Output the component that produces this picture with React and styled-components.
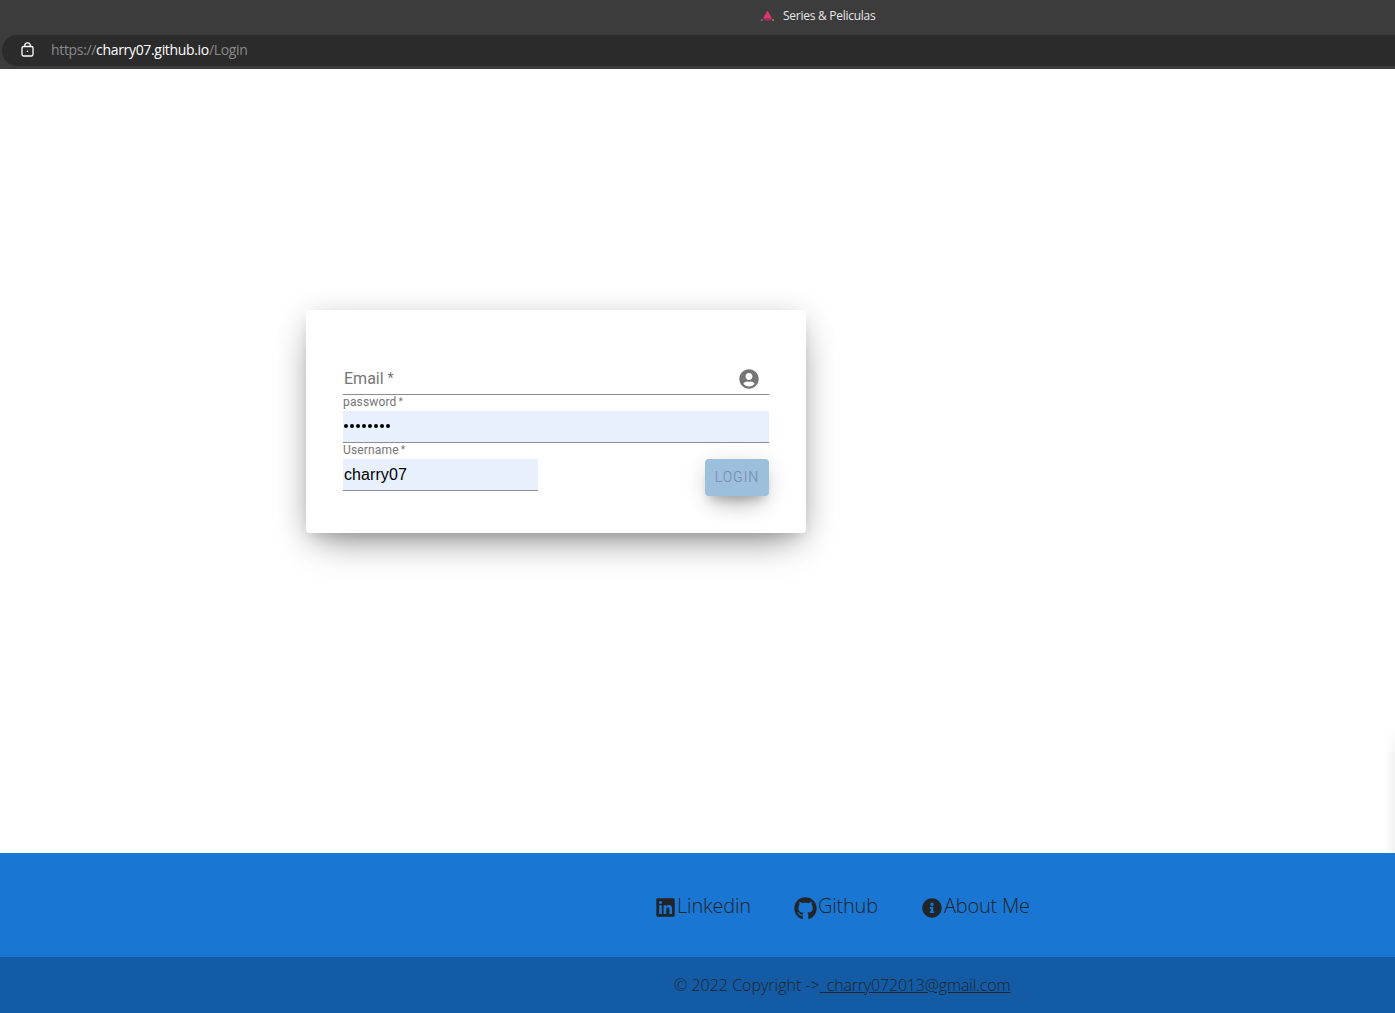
import { createGlobalStyle } from 'styled-components';
import styled from 'styled-components';
import { FaLinkedin, FaGithub, FaInfoCircle, FaUserCircle } from 'react-icons/fa';

const GlobalStyle = createGlobalStyle`
  html, body {
    margin: 0;
    padding: 0;
    background: #fff;
  }
  * { box-sizing: border-box; }
`;

const Page = styled.div`
  width: 1395px;
  height: 1013px;
  display: flex;
  flex-direction: column;
  overflow: hidden;
`;

const TitleBar = styled.div`
  height: 35px;
  background: #3c3c3c;
  display: flex;
  align-items: center;
  padding: 0 0 4px 760px;
  gap: 8px;
  color: #e8e8e8;
  font-family: "Open Sans", sans-serif;
  font-size: 12px;
  letter-spacing: -0.27px;
`;

const UrlBar = styled.div`
  height: 31px;
  margin-left: 2px;
  background: #2b2b2b;
  border-radius: 15px 0 0 15px;
  display: flex;
  align-items: center;
  padding: 0 0 2px 19px;
  gap: 17px;
  font-family: "Open Sans", sans-serif;
  font-size: 14px;
  letter-spacing: -0.33px;
  color: #8a8a8a;
`;

const UrlRow = styled.div`
  background: #3c3c3c;
  height: 34px;
  padding-bottom: 3px;
`;

const Host = styled.span`
  color: #fff;
`;

const Main = styled.main`
  position: relative;
  height: 784px;
  background: #fff;
  padding: 241px 0 0 306px;

  &::after {
    content: '';
    position: absolute;
    right: 0;
    bottom: 0;
    width: 10px;
    height: 125px;
    background: linear-gradient(to right, rgba(0, 0, 0, 0), rgba(0, 0, 0, 0.05));
    mask-image: linear-gradient(to bottom, transparent, #000 30px);
  }
`;

const Card = styled.form`
  width: 500px;
  height: 223px;
  background: #fff;
  border-radius: 4px;
  box-shadow: 0 16px 38px -12px rgba(0, 0, 0, 0.42), 0 4px 30px 0 rgba(0, 0, 0, 0.13), 0 8px 12px -5px rgba(0, 0, 0, 0.1);
  padding: 52px 37px 0;
  font-family: Roboto, sans-serif;
`;

const EmailField = styled.div`
  height: 33px;
  border-bottom: 1px solid #8c8c8c;
  display: flex;
  align-items: center;
  justify-content: space-between;
  padding: 0 10px 0 1px;
  font-size: 16px;
  color: #757575;

  svg {
    margin-top: 2px;
  }
`;

const Required = styled.span`
  font-size: ${({ $small }) => ($small ? '10px' : '14px')};
  margin-left: ${({ $small }) => ($small ? '2px' : '4px')};
  vertical-align: 1px;
`;

const SmallLabel = styled.div`
  height: 16px;
  font-size: 12px;
  line-height: 13px;
  letter-spacing: 0.15px;
  color: #757575;
`;

const FilledInput = styled.div`
  height: 32px;
  width: ${({ $width }) => $width};
  background: #e8f0fe;
  border-bottom: 1px solid #8c8c8c;
  display: flex;
  align-items: center;
  padding-left: 1px;
  font-family: "Liberation Sans", Arial, sans-serif;
  font-size: 16px;
  letter-spacing: 0.08px;
  color: #000;
`;

const Dots = styled.span`
  display: flex;
  gap: 2px;
  padding-bottom: 1px;
`;

const Dot = styled.i`
  width: 4px;
  height: 4px;
  border-radius: 50%;
  background: #000;
`;

const BottomRow = styled.div`
  display: flex;
  justify-content: space-between;
`;

const LoginButton = styled.button`
  width: 64px;
  height: 37px;
  margin-top: 16px;
  padding: 0 0 2px;
  border: 0;
  border-radius: 4px;
  background: #9cbfdc;
  color: #7088a0;
  font-family: Roboto, sans-serif;
  font-size: 14px;
  font-weight: 300;
  letter-spacing: 0.95px;
  box-shadow: 0 14px 26px -12px rgba(0, 0, 0, 0.42), 0 4px 23px 0 rgba(0, 0, 0, 0.12), 0 8px 10px -5px rgba(0, 0, 0, 0.2);
`;

const Footer = styled.footer`
  flex: 1;
  display: flex;
  flex-direction: column;
  font-family: "Open Sans", sans-serif;
  color: #212529;
`;

const LinksBar = styled.nav`
  height: 104px;
  background: #1976d2;
  display: flex;
  padding: 40px 0 0 655px;
  gap: 43px;
  font-size: 20px;
  font-weight: 300;
  letter-spacing: -0.2px;
`;

const FooterLink = styled.a`
  display: flex;
  align-items: flex-start;
  gap: ${({ $gap }) => $gap || '1px'};
  height: 28px;
  color: #212529;
  text-decoration: none;
  line-height: 26px;

  svg {
    margin-top: ${({ $iconTop }) => $iconTop};
    margin-left: ${({ $iconLeft }) => $iconLeft || 0};
    flex-shrink: 0;
  }
`;

const Copyright = styled.div`
  flex: 1;
  background: #135ba5;
  padding: 17px 0 0 674px;
  font-size: 16px;
  font-weight: 300;
  line-height: 22px;

  a {
    color: #212529;
    text-decoration: underline;
    letter-spacing: -0.17px;
    word-spacing: 3px;
  }
`;

function TabIcon() {
  return (
    <svg width="15" height="12" viewBox="0 0 15 12">
      <path d="M7.5 0.5 L12 8.5 L3 8.5 Z" fill="#e0356f" />
      <path d="M3 8.5 L12 8.5 L10 10.5 L5 10.5 Z" fill="#a8325a" />
      <circle cx="1.8" cy="10" r="1" fill="#a0609a" />
      <circle cx="13.2" cy="10" r="1" fill="#e0704c" />
    </svg>
  );
}

function LockIcon() {
  return (
    <svg width="13" height="15" viewBox="0 0 13 15" fill="none" stroke="#fff" strokeWidth="1.3">
      <rect x="1" y="4.5" width="11" height="9.5" rx="1.5" />
      <path d="M3.8 4.5 V3.2 a2.7 2.4 0 0 1 5.4 0 V4.5" />
      <circle cx="6.5" cy="9.3" r="0.8" fill="#fff" stroke="none" />
    </svg>
  );
}

export default function App() {
  return (
    <Page>
      <GlobalStyle />
      <TitleBar>
        <TabIcon />
        <span>Series &amp; Peliculas</span>
      </TitleBar>
      <UrlRow>
        <UrlBar>
          <LockIcon />
          <span>
            https://<Host>charry07.github.io</Host>/Login
          </span>
        </UrlBar>
      </UrlRow>
      <Main>
        <Card>
          <EmailField>
            <span>
              Email<Required>*</Required>
            </span>
            <FaUserCircle size={20} color="#757575" />
          </EmailField>
          <SmallLabel>
            password<Required $small>*</Required>
          </SmallLabel>
          <FilledInput>
            <Dots>
              {Array.from({ length: 8 }, (_, i) => (
                <Dot key={i} />
              ))}
            </Dots>
          </FilledInput>
          <BottomRow>
            <div>
              <SmallLabel>
                Username<Required $small>*</Required>
              </SmallLabel>
              <FilledInput $width="195px">charry07</FilledInput>
            </div>
            <LoginButton type="button">LOGIN</LoginButton>
          </BottomRow>
        </Card>
      </Main>
      <Footer>
        <LinksBar>
          <FooterLink href="#" $iconTop="4px">
            <FaLinkedin size={21} />
            <span>Linkedin</span>
          </FooterLink>
          <FooterLink href="#" $iconTop="4px">
            <FaGithub size={23} />
            <span>Github</span>
          </FooterLink>
          <FooterLink href="#" $iconTop="5px" $iconLeft="1px" $gap="2px">
            <FaInfoCircle size={20} />
            <span>About Me</span>
          </FooterLink>
        </LinksBar>
        <Copyright>
          © 2022 Copyright -&gt;<a href="#"> charry072013@gmail.com</a>
        </Copyright>
      </Footer>
    </Page>
  );
}
